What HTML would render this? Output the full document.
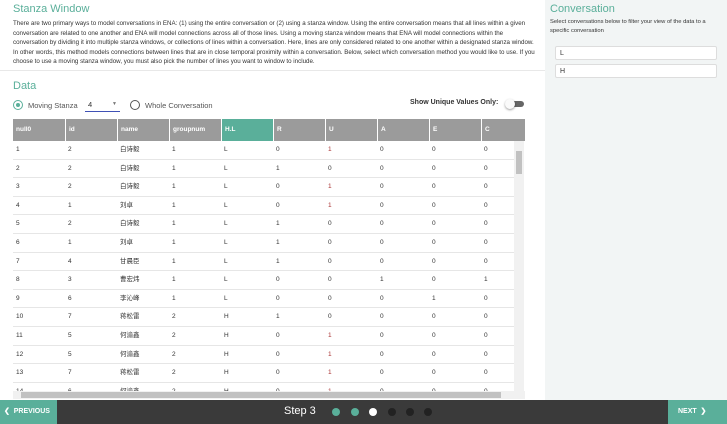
<!DOCTYPE html>
<html><head><meta charset="utf-8"><style>
*{margin:0;padding:0;box-sizing:border-box}
body{width:727px;height:424px;overflow:hidden;background:#fff;font-family:"Liberation Sans","Noto Sans CJK SC",sans-serif;position:relative;color:#333}
.a{position:absolute}
h2{font-weight:normal;color:#5aaf9a;font-size:11px;position:absolute}
.p{font-size:6.2px;line-height:9.6px;color:#333}
.hd{background:#9b9b9b;color:#fff;font-weight:bold;font-size:6.5px;height:22px;line-height:22px;padding-left:3px;border-left:1px solid #fff}
.c{font-size:6.5px;padding-left:3px;line-height:18.5px}
.row{position:absolute;left:13px;width:501px;height:18.5px;border-bottom:1px solid #e6e6e6}
.dot{position:absolute;top:408px;width:8px;height:8px;border-radius:50%}
</style></head><body>
<h2 style="left:13px;top:3px">Stanza Window</h2>
<div class="a p" style="left:13px;top:19px;width:525px">There are two primary ways to model conversations in ENA: (1) using the entire conversation or (2) using a stanza window. Using the entire conversation means that all lines within a given conversation are related to one another and ENA will model connections across all of those lines. Using a moving stanza window means that ENA will model connections within the conversation by dividing it into multiple stanza windows, or collections of lines within a conversation. Here, lines are only considered related to one another within a designated stanza window. In other words, this method models connections between lines that are in close temporal proximity within a conversation. Below, select which conversation method you would like to use. If you choose to use a moving stanza window, you must also pick the number of lines you want to window to include.</div>
<div class="a" style="left:0;top:70px;width:545px;border-top:1px solid #e8e8e8"></div>
<h2 style="left:13px;top:80px">Data</h2>
<div class="a" style="left:13px;top:100px;width:10px;height:10px;border:1px solid #5aaf9a;border-radius:50%"><div style="margin:2px;width:4px;height:4px;border-radius:50%;background:#5aaf9a"></div></div>
<div class="a" style="left:28px;top:101px;font-size:7.5px;color:#555">Moving Stanza</div>
<div class="a" style="left:85px;top:99px;width:35px;height:13px;border-bottom:1px solid #3f51b5;font-size:7.5px;padding-left:3px;line-height:11px">4<span style="position:absolute;right:3px;font-size:5px;color:#777">▼</span></div>
<div class="a" style="left:130px;top:100px;width:10px;height:10px;border:1px solid #555;border-radius:50%"></div>
<div class="a" style="left:145px;top:101px;font-size:7.5px;color:#555">Whole Conversation</div>
<div class="a" style="left:410px;top:99px;font-size:7px;font-weight:bold;color:#333">Show Unique Values Only:</div>
<div class="a" style="left:508px;top:101px;width:16px;height:6px;border-radius:3px;background:#666"></div>
<div class="a" style="left:505px;top:99px;width:10px;height:10px;border-radius:50%;background:#fafafa;box-shadow:0 1px 2px rgba(0,0,0,.4)"></div>
<div class="a" style="left:13px;top:119px;display:flex;width:512px">
<div class="hd" style="width:52px;border-left:0">null0</div><div class="hd" style="width:52px">id</div><div class="hd" style="width:52px">name</div><div class="hd" style="width:52px">groupnum</div><div class="hd" style="width:52px;background:#5aaf9a">H.L</div><div class="hd" style="width:52px">R</div><div class="hd" style="width:52px">U</div><div class="hd" style="width:52px">A</div><div class="hd" style="width:52px">E</div><div class="hd" style="width:44px">C</div></div>
<div id="rows"></div>
<div class="a" style="left:514px;top:141px;width:10px;height:250px;background:#f1f1f1"><div style="margin:10px 2px;width:6px;height:23px;background:#c1c1c1"></div></div>
<div class="a" style="left:13px;top:391px;width:512px;height:8px;background:#f1f1f1"><div style="margin:1px 8px;width:480px;height:6px;background:#c1c1c1"></div></div>
<div class="a" style="left:545px;top:0;width:182px;height:400px;background:#f2f5f5"></div>
<h2 style="left:550px;top:3px">Conversation</h2>
<div class="a p" style="left:550px;top:18px;width:175px;line-height:9px;font-size:5.8px">Select conversations below to filter your view of the data to a specific conversation</div>
<div class="a" style="left:555px;top:46px;width:162px;height:14px;background:#fff;border:1px solid #ddd;border-radius:2px;font-size:7px;padding:3px 4px">L</div>
<div class="a" style="left:555px;top:64px;width:162px;height:14px;background:#fff;border:1px solid #ddd;border-radius:2px;font-size:7px;padding:3px 4px">H</div>
<div class="a" style="left:0;top:400px;width:727px;height:24px;background:#3a3a3a"></div>
<div class="a" style="left:0;top:400px;width:57px;height:24px;background:#5aaf9a;color:#fff;font-size:7px;font-weight:bold;line-height:24px;padding-left:4px">❮&nbsp; PREVIOUS</div>
<div class="a" style="left:668px;top:400px;width:59px;height:24px;background:#5aaf9a;color:#fff;font-size:7px;font-weight:bold;line-height:24px;padding-left:10px">NEXT &nbsp;❯</div>
<div class="a" style="left:284px;top:405px;color:#fff;font-size:11px">Step 3</div>
<div class="dot" style="left:332px;background:#5aaf9a"></div>
<div class="dot" style="left:351px;background:#5aaf9a"></div>
<div class="dot" style="left:369px;background:#fff"></div>
<div class="dot" style="left:388px;background:#222"></div>
<div class="dot" style="left:406px;background:#222"></div>
<div class="dot" style="left:424px;background:#222"></div>
<script>
var d=[[1,2,"白诗毅",1,"L",0,1,0,0,0],[2,2,"白诗毅",1,"L",1,0,0,0,0],[3,2,"白诗毅",1,"L",0,1,0,0,0],[4,1,"刘卓",1,"L",0,1,0,0,0],[5,2,"白诗毅",1,"L",1,0,0,0,0],[6,1,"刘卓",1,"L",1,0,0,0,0],[7,4,"甘晨臣",1,"L",1,0,0,0,0],[8,3,"曹宏炜",1,"L",0,0,1,0,1],[9,6,"李沁峰",1,"L",0,0,0,1,0],[10,7,"蒋松雷",2,"H",1,0,0,0,0],[11,5,"何渝鑫",2,"H",0,1,0,0,0],[12,5,"何渝鑫",2,"H",0,1,0,0,0],[13,7,"蒋松雷",2,"H",0,1,0,0,0],[14,6,"何渝鑫",2,"H",0,1,0,0,0]];
var h="";d.forEach(function(r,i){var t=141+i*18.6;if(t>383)return;h+='<div class="row" style="top:'+t+'px;'+(t+18.5>391?'height:'+(391-t)+'px;overflow:hidden;border:0':'')+'">';r.forEach(function(v,j){h+='<span class="a c" style="left:'+(j*52)+'px;'+(j==6&&v==1?'color:#a33':'')+'">'+v+'</span>'});h+='</div>'});
document.getElementById("rows").innerHTML=h;
</script>
</body></html>
